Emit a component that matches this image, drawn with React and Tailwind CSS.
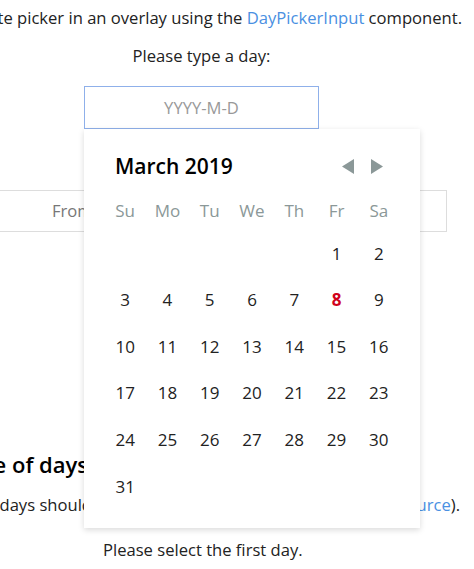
import React from "react";

const weekdays = ["Su", "Mo", "Tu", "We", "Th", "Fr", "Sa"];

// March 2019 starts on a Friday
const weeks = [
  [null, null, null, null, null, 1, 2],
  [3, 4, 5, 6, 7, 8, 9],
  [10, 11, 12, 13, 14, 15, 16],
  [17, 18, 19, 20, 21, 22, 23],
  [24, 25, 26, 27, 28, 29, 30],
  [31, null, null, null, null, null, null],
];

const Calendar = () => {
  return (
    <div className="absolute left-[84px] top-[129px] w-[336px] h-[399px] bg-white shadow-[0_2px_6px_rgba(0,0,0,0.15)] px-[20px] pt-[23px] text-[17px]">
      <div className="flex items-center justify-between h-[28px] pl-[11px] pr-[17px]">
        <span className="text-[21px] font-semibold text-black leading-none">
          March 2019
        </span>
        <div className="flex items-center gap-[17px]">
          <svg width="12" height="15" viewBox="0 0 12 15">
            <polygon points="12,0 12,15 0,7.5" fill="#8b9898" />
          </svg>
          <svg width="12" height="15" viewBox="0 0 12 15">
            <polygon points="0,0 0,15 12,7.5" fill="#8b9898" />
          </svg>
        </div>
      </div>
      <div className="grid grid-cols-7 mt-[12px] h-[38px] items-center text-[#8b9898]">
        {weekdays.map((d) => (
          <div key={d} className="text-center">
            {d}
          </div>
        ))}
      </div>
      {weeks.map((week, i) => (
        <div key={i} className="grid grid-cols-7 h-[46.6px] items-center">
          {week.map((day, j) => (
            <div
              key={j}
              className={
                day === 8
                  ? "text-center text-[#d0021b] font-bold"
                  : "text-center text-[#222]"
              }
            >
              {day}
            </div>
          ))}
        </div>
      ))}
    </div>
  );
};

const App = () => {
  return (
    <div
      className="relative w-[474px] h-[569px] overflow-hidden bg-white text-[16.6px] text-[#222]"
      style={{ fontFamily: '"Open Sans", "Noto Sans", sans-serif' }}
    >
      <div className="flex justify-end pr-[12px] pt-[6px] h-[24px] whitespace-nowrap">
        <p>
          Display the date picker in an overlay using the{" "}
          <a className="text-[#4a90e2]">DayPickerInput</a> component.
        </p>
      </div>

      <div className="w-[235px] ml-[84px] flex flex-col items-center">
        <p className="mt-[20px] h-[24px]">Please type a day:</p>
        <input
          className="mt-[18px] w-[235px] h-[43px] border border-[#8fb0ea] text-center outline-none placeholder:text-[#999]"
          placeholder="YYYY-M-D"
        />
      </div>

      <div className="mt-[61px] -ml-[20px] w-[467px] h-[42px] border border-[#ddd] flex items-center pl-[71px] text-[#777]">
        From
      </div>

      <div className="mt-[216px] flex">
        <div className="w-[88px] flex justify-end whitespace-nowrap">
          <h2 className="text-[22px] font-semibold text-black">
            Selecting a range of days
          </h2>
        </div>
      </div>

      <div className="mt-[12px] flex justify-between whitespace-nowrap pr-[14px]">
        <div className="w-[92px] flex justify-end">
          <p>The range of days should</p>
        </div>
        <p>
          (see <a className="text-[#4a90e2]">source</a>).
        </p>
      </div>

      <div className="mt-[20px] pl-[103px]">
        <p>Please select the first day.</p>
      </div>

      <Calendar />
    </div>
  );
};

export default App;
